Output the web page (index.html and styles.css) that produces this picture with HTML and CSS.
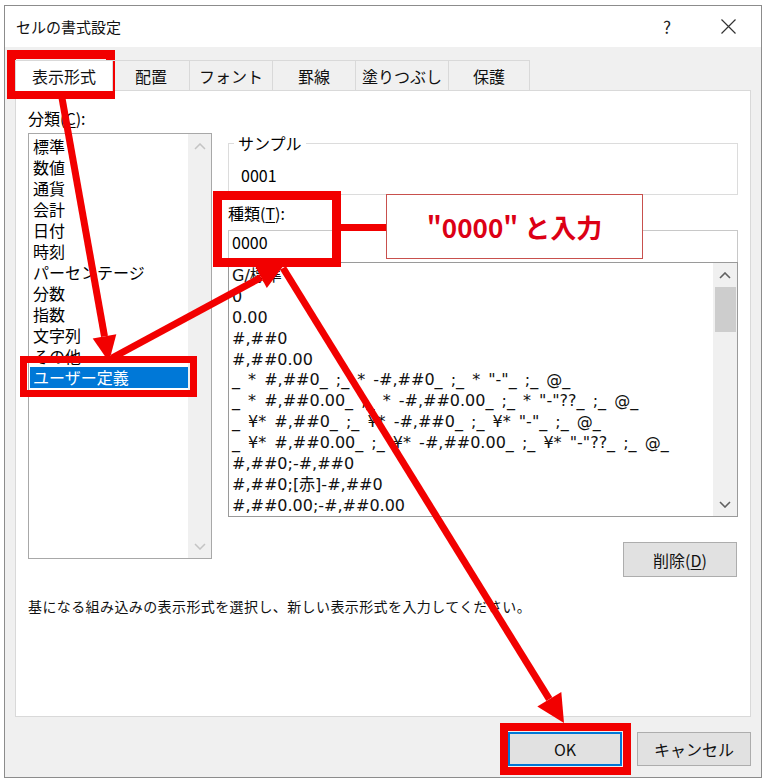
FILE: index.html
```html
<!DOCTYPE html>
<html lang="ja">
<head>
<meta charset="utf-8">
<title>セルの書式設定</title>
<link rel="stylesheet" href="styles.css">
</head>
<body>
<div class="dialog">
  <div class="titlebar">
    <span class="title">セルの書式設定</span>
    <span class="help">?</span>
    <span class="close"><svg width="15" height="15" viewBox="0 0 15 15"><path d="M0.5 0.5L14.5 14.5M14.5 0.5L0.5 14.5" stroke="#333" stroke-width="1.2" fill="none"/></svg></span>
  </div>
  <div class="tabs">
    <div class="tab t1 active">表示形式</div>
    <div class="tab t2">配置</div>
    <div class="tab t3">フォント</div>
    <div class="tab t4">罫線</div>
    <div class="tab t5">塗りつぶし</div>
    <div class="tab t6">保護</div>
  </div>
  <div class="panel">
    <div class="cols">
      <div class="left">
        <div class="label">分類(<u>C</u>):</div>
        <div class="catlist">
          <ul class="cat-items">
            <li>標準</li>
            <li>数値</li>
            <li>通貨</li>
            <li>会計</li>
            <li>日付</li>
            <li>時刻</li>
            <li>パーセンテージ</li>
            <li>分数</li>
            <li>指数</li>
            <li>文字列</li>
            <li>その他</li>
            <li class="sel">ユーザー定義</li>
          </ul>
          <div class="vscroll cat-scroll">
            <div class="sbtn"><svg width="12" height="7" viewBox="0 0 12 7"><polyline points="1,6 6,1 11,6" fill="none" stroke="#c4c4c4" stroke-width="1.5"/></svg></div>
            <div class="sbtn"><svg width="12" height="7" viewBox="0 0 12 7"><polyline points="1,1 6,6 11,1" fill="none" stroke="#c4c4c4" stroke-width="1.5"/></svg></div>
          </div>
        </div>
      </div>
      <div class="right">
        <div class="sample">
          <span class="legend">サンプル</span>
          <div class="sample-val">0001</div>
        </div>
        <div class="label kind">種類(<u>T</u>):</div>
        <div class="input">0000</div>
        <div class="fmtlist">
          <div class="fmt-items">
            <div>G/標準</div>
            <div>0</div>
            <div>0.00</div>
            <div>#,##0</div>
            <div>#,##0.00</div>
            <div>_ * #,##0_ ;_ * -#,##0_ ;_ * "-"_ ;_ @_</div>
            <div>_ * #,##0.00_ ;_ * -#,##0.00_ ;_ * "-"??_ ;_ @_</div>
            <div>_ ¥* #,##0_ ;_ ¥* -#,##0_ ;_ ¥* "-"_ ;_ @_</div>
            <div>_ ¥* #,##0.00_ ;_ ¥* -#,##0.00_ ;_ ¥* "-"??_ ;_ @_</div>
            <div>#,##0;-#,##0</div>
            <div>#,##0;[赤]-#,##0</div>
            <div>#,##0.00;-#,##0.00</div>
          </div>
          <div class="vscroll fmt-scroll">
            <div class="sbtn"><svg width="12" height="7" viewBox="0 0 12 7"><polyline points="1,6 6,1 11,6" fill="none" stroke="#606060" stroke-width="1.6"/></svg></div>
            <div class="thumb"></div>
            <div class="track"></div>
            <div class="sbtn"><svg width="12" height="7" viewBox="0 0 12 7"><polyline points="1,1 6,6 11,1" fill="none" stroke="#606060" stroke-width="1.6"/></svg></div>
          </div>
        </div>
        <div class="del-row"><button class="btn del">削除(<u>D</u>)</button></div>
      </div>
    </div>
    <p class="desc">基になる組み込みの表示形式を選択し、新しい表示形式を入力してください。</p>
  </div>
  <div class="footer">
    <button class="btn ok">OK</button>
    <button class="btn">キャンセル</button>
  </div>
</div>

<div class="annot">
  <svg class="arrows" width="768" height="784" viewBox="0 0 768 784">
    <g fill="#f20000" stroke="#f20000">
      <line x1="62" y1="98" x2="104.5" y2="336.4" stroke-width="7"/>
      <polygon points="109,362 116.3,334.3 92.7,338.5" stroke="none"/>
      <line x1="112" y1="358" x2="261.1" y2="277.4" stroke-width="7"/>
      <polygon points="284,265 266.8,288 255.4,266.8" stroke="none"/>
      <line x1="283" y1="268" x2="549.3" y2="699.2" stroke-width="7"/>
      <polygon points="564,723 561.3,691.9 537.3,706.5" stroke="none"/>
    </g>
  </svg>
  <div class="rbox rb-tab"></div>
  <div class="rbox rb-user"></div>
  <div class="rbox rb-kind"></div>
  <div class="rbox rb-ok"></div>
  <div class="connector"></div>
  <div class="callout">"0000" と入力</div>
</div>
</body>
</html>
```

FILE: styles.css
```css
* { box-sizing: border-box; }
html, body { margin: 0; padding: 0; background: #fff; }
body {
  width: 768px;
  height: 784px;
  position: relative;
  overflow: hidden;
  font-family: "Noto Sans CJK JP", "Noto Sans", sans-serif;
  color: #000;
}
u { text-decoration-thickness: 1px; text-underline-offset: 2px; }

.dialog {
  margin: 5px 0 0 4px;
  width: 758px;
  height: 773px;
  border: 1px solid #8c8c8c;
  background: #f0f0f0;
  display: flex;
  flex-direction: column;
}
.titlebar {
  flex: none;
  height: 41px;
  background: #fff;
  display: flex;
  align-items: center;
  padding-left: 11px;
  font-size: 15px;
}
.title { flex: 1; color: #111; }
.help { width: 46px; margin-right: 15px; text-align: center; font-size: 17px; color: #222; }
.close { width: 46px; margin-right: 10px; display: flex; justify-content: center; align-items: center; }

.tabs {
  flex: none;
  display: flex;
  align-items: flex-start;
  height: 30px;
  margin: 13px 0 0 10px;
  position: relative;
  z-index: 1;
}
.tab {
  height: 30px;
  border: 1px solid #d9d9d9;
  border-bottom: none;
  margin-left: -1px;
  display: flex;
  align-items: center;
  justify-content: center;
  font-size: 16px;
  color: #111;
}
.tab.t1 { margin-left: 0; width: 98px; }
.tab.t2 { width: 78px; }
.tab.t3 { width: 84px; }
.tab.t4 { width: 84px; }
.tab.t5 { width: 94px; }
.tab.t6 { width: 82px; }
.tab.active { background: #fff; height: 31px; }

.panel {
  flex: none;
  margin-left: 10px;
  width: 736px;
  height: 627px;
  background: #fff;
  border: 1px solid #d9d9d9;
  padding: 17px 12px 0;
}
.cols {
  display: grid;
  grid-template-columns: 184px 510px;
  column-gap: 16px;
  align-items: start;
}
.label { font-size: 16px; line-height: 20px; height: 20px; white-space: nowrap; }

.catlist {
  margin-top: 5px;
  height: 426px;
  border: 1px solid #a8a8a8;
  display: flex;
}
.cat-items {
  flex: 1;
  list-style: none;
  margin: 0;
  padding: 2px 0 0 1px;
}
.cat-items li {
  font-size: 16px;
  line-height: 21px;
  height: 21px;
  padding-left: 3px;
  white-space: nowrap;
}
.cat-items li.sel { background: #0078d7; color: #fff; }

.vscroll {
  flex: none;
  background: #f0f0f0;
  display: flex;
  flex-direction: column;
  align-items: center;
}
.cat-scroll { width: 23px; justify-content: space-between; }
.fmt-scroll { width: 24px; }
.sbtn { height: 24px; width: 100%; display: flex; align-items: center; justify-content: center; }
.thumb { width: 21px; height: 45px; background: #cdcdcd; }
.track { flex: 1; }

.sample {
  position: relative;
  margin-top: 35px;
  height: 52px;
  border: 1px solid #dcdcdc;
  padding: 21px 0 0 12px;
  font-size: 16px;
  line-height: 20px;
}
.legend {
  position: absolute;
  top: -11px;
  left: 5px;
  padding: 0 4px;
  background: #fff;
  line-height: 20px;
}
.kind { margin-top: 8px; }
.input {
  margin-top: 7px;
  height: 32px;
  border: 1px solid #c8c8c8;
  border-bottom: none;
  padding: 0 3px;
  font-size: 16px;
  line-height: 23px;
}
.fmtlist {
  height: 255px;
  border: 1px solid #9a9a9a;
  display: flex;
}
.fmt-items {
  flex: 1;
  padding: 3px 0 0 3px;
  font-family: "DejaVu Sans", "Noto Sans CJK JP", sans-serif;
  font-size: 16px;
  word-spacing: 3px;
  overflow: hidden;
}
.fmt-items div { height: 20.9px; line-height: 20.9px; white-space: pre; color: #111; }

.del-row { margin-top: 25px; display: flex; justify-content: flex-end; padding-right: 1px; }
.btn {
  width: 114px;
  height: 34px;
  background: #e1e1e1;
  border: 1px solid #adadad;
  font-family: "Noto Sans CJK JP", "Noto Sans", sans-serif;
  font-size: 16px;
  color: #111;
  padding: 0;
}
.btn.del { height: 35px; }
.btn.ok { border: 2px solid #0078d7; }

.desc {
  margin: 19px 0 0;
  font-size: 14px;
  line-height: 20px;
  letter-spacing: 0.4px;
  color: #111;
}
.footer {
  flex: 1;
  display: flex;
  justify-content: flex-end;
  align-items: flex-start;
  gap: 15px;
  padding: 15px 10px 0 0;
}

/* annotation overlay */
.annot { position: absolute; left: 0; top: 0; width: 768px; height: 784px; pointer-events: none; }
.arrows { position: absolute; left: 0; top: 0; }
.rbox { position: absolute; border: 9px solid #f20000; }
.rb-tab { left: 7px; top: 50px; width: 108px; height: 49px; }
.rb-user { left: 20px; top: 356px; width: 177px; height: 41px; border-width: 7px; }
.rb-kind { left: 213px; top: 191px; width: 128px; height: 76px; }
.rb-ok { left: 500px; top: 723px; width: 131px; height: 52px; border-width: 8px; }
.connector { position: absolute; left: 340px; top: 224px; width: 47px; height: 7px; background: #f20000; }
.callout {
  position: absolute;
  left: 386px;
  top: 194px;
  width: 257px;
  height: 65px;
  border: 1px solid #c8504d;
  background: #fff;
  display: flex;
  align-items: center;
  justify-content: center;
  font-size: 26px;
  font-weight: 700;
  color: #dc0015;
  white-space: pre;
}
```
